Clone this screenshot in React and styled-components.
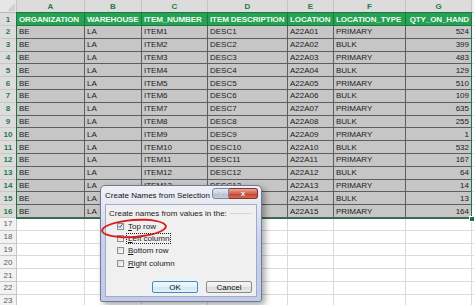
import React from "react";
import styled, { createGlobalStyle } from "styled-components";

const GlobalStyle = createGlobalStyle`
  html, body {
    margin: 0;
    padding: 0;
    background: #fff;
    overflow: hidden;
  }
  body {
    font-family: "Liberation Sans", Arial, sans-serif;
  }
`;

const COLS = ["A", "B", "C", "D", "E", "F", "G"];
const HEADERS = ["ORGANIZATION", "WAREHOUSE", "ITEM_NUMBER", "ITEM DESCRIPTION", "LOCATION", "LOCATION_TYPE", "QTY_ON_HAND"];
const QTY = [524, 399, 483, 129, 510, 109, 635, 255, 1, 532, 167, 64, 14, 13, 164];
const TOTAL_ROWS = 24;

const Sheet = styled.div`
   position: relative;
   width: 474px;
   height: 305px;
   overflow: hidden;
   display: grid;
   grid-template-columns: 17px 68px 57px 66px 80px 46px 72px 66px 1fr;
   grid-template-rows: 13px 13px repeat(${TOTAL_ROWS - 1}, 12.8px);
   font-size: 8px;
`;

const Corner = styled.div`
   position: relative;
   background: #e6e6e6;
   border-right: 1px solid #c6c6c6;
   border-bottom: 1px solid #b8b8b8;
   box-sizing: border-box;
   &::after{
      content: "";
      position: absolute;
      right: 1px;
      bottom: 1px;
      border-left: 8px solid transparent;
      border-bottom: 8px solid #cfcfcf;
   }
`;

const ColHead = styled.div`
   box-sizing: border-box;
   display: flex;
   align-items: center;
   justify-content: center;
   background: ${p => p.$sel ? "#dcdcdc" : "#f2f2f2"};
   color: ${p => p.$sel ? "#1f7a45" : "#555"};
   font-weight: bold;
   border-right: 1px solid #c4c4c4;
   border-bottom: 1px solid ${p => p.$sel ? "#9cc9ad" : "#c4c4c4"};
`;

const RowHead = styled.div`
   box-sizing: border-box;
   display: flex;
   align-items: center;
   justify-content: center;
   background: ${p => p.$sel ? "#dcdcdc" : "#f2f2f2"};
   color: ${p => p.$sel ? "#1f7a45" : "#5a5a5a"};
   font-weight: ${p => p.$sel ? "bold" : "normal"};
   border-right: 1px solid ${p => p.$sel ? "#9cc9ad" : "#c4c4c4"};
   border-bottom: 1px solid #c8c8c8;
`;

const Cell = styled.div`
   box-sizing: border-box;
   display: flex;
   align-items: center;
   justify-content: ${p => p.$right ? "flex-end" : "flex-start"};
   padding: 0 2px;
   white-space: nowrap;
   overflow: hidden;
   ${p => p.$kind === "head" && `
      background: #27a255;
      color: #f1faf1;
      font-weight: bold;
      letter-spacing: -0.1px;
      border-right: 1px solid #1a7a3e;
      border-bottom: 1px solid #1a7a3e;
   `}
   ${p => p.$kind === "data" && `
      background: #c6c6c6;
      color: #1c1c1c;
      border-right: 1px solid #5e5e5e;
      border-bottom: 1px solid #5e5e5e;
   `}
   ${p => p.$kind === "empty" && `
      background: #fff;
      border-right: 1px solid #dadada;
      border-bottom: 1px solid #dadada;
   `}
`;

const Tail = styled.div`
   background: ${p => p.$head ? "#f2f2f2" : "#fff"};
   border-bottom: 1px solid ${p => p.$head ? "#c4c4c4" : "#e0e0e0"};
   box-sizing: border-box;
`;

const Selection = styled.div`
   position: absolute;
   grid-column: 2 / 9;
   grid-row: 2 / 18;
   top: -1px;
   left: -1px;
   right: 0;
   bottom: -1px;
   border: 1.5px solid #217346;
   pointer-events: none;
   &::after{
      content: "";
      position: absolute;
      right: -4px;
      bottom: -4px;
      width: 4px;
      height: 4px;
      background: #217346;
      border: 1px solid #fff;
   }
`;

/* ---------- dialog ---------- */

const Dialog = styled.div`
   position: absolute;
   left: 100px;
   top: 185px;
   width: 162px;
   height: 117px;
   box-sizing: border-box;
   display: flex;
   flex-direction: column;
   padding: 0 4px 4px 4px;
   border: 1px solid #6f7894;
   border-radius: 5px 5px 2px 2px;
   background: linear-gradient(to bottom, #eff1f6 0px, #e6e9f2 18px, #c8d0ee 55px, #c3cbeb 100%);
   box-shadow: 3px 3px 6px rgba(0, 0, 0, 0.35);
   font-size: 8px;
   color: #1a1a1a;
   z-index: 3;
`;

const TitleBar = styled.div`
   height: 18px;
   display: flex;
   align-items: flex-start;
   justify-content: space-between;
`;

const Title = styled.span`
   margin-top: 5px;
   white-space: nowrap;
   font-size: 8px;
   color: #111;
`;

const Caps = styled.div`
   display: flex;
   margin-top: 2px;
   margin-right: -1px;
`;

const CapButton = styled.div`
   height: 11px;
   width: ${p => p.$close ? "29px" : "17px"};
   box-sizing: border-box;
   display: flex;
   align-items: center;
   justify-content: center;
   font-weight: bold;
   font-size: ${p => p.$close ? "8px" : "7px"};
   color: ${p => p.$close ? "#fff" : "#f4f6fb"};
   border: 1px solid ${p => p.$close ? "#8a3026" : "#7c859f"};
   border-radius: ${p => p.$close ? "0 3px 3px 0" : "3px 0 0 3px"};
   border-left-width: ${p => p.$close ? "0" : "1px"};
   background: ${p => p.$close
      ? "linear-gradient(to bottom, #e9a99c, #d4604f 50%, #c2402f 51%, #d46a55)"
      : "linear-gradient(to bottom, #e9ecf4, #c9cfe0 50%, #b4bcd4 51%, #c6cde0)"};
   text-shadow: 0 0 1px rgba(0,0,0,0.4);
`;

const Body = styled.div`
   flex: 1;
   display: flex;
   flex-direction: column;
   background: #f0f0f0;
   border: 1px solid #a3abc4;
   padding: 3px 4px 3px 3px;
`;

const Legend = styled.div`
   display: flex;
   align-items: center;
   gap: 3px;
   height: 10px;
   white-space: nowrap;
   &::after{
      content: "";
      flex: 1;
      height: 1px;
      background: #d6d6d6;
   }
`;

const Options = styled.div`
   display: flex;
   flex-direction: column;
   padding: 2px 0 0 8px;
`;

const CheckRow = styled.div`
   height: 12.3px;
   display: flex;
   align-items: center;
   gap: 3px;
`;

const Box = styled.span`
   width: 7px;
   height: 7px;
   box-sizing: border-box;
   border: 1px solid #8e8f8f;
   background: linear-gradient(135deg, #dcdcdc, #fbfbfb);
   display: flex;
   align-items: center;
   justify-content: center;
`;

const Label = styled.span`
   padding: 0 1px;
   outline: ${p => p.$focus ? "1px dotted #222" : "none"};
   line-height: 9px;
   u{
      text-decoration: underline;
   }
`;

const Buttons = styled.div`
   margin-top: auto;
   display: flex;
   justify-content: flex-end;
   gap: 8px;
`;

const Button = styled.div`
   width: 46px;
   height: 12px;
   box-sizing: border-box;
   display: flex;
   align-items: center;
   justify-content: center;
   border: 1px solid ${p => p.$primary ? "#3c8fc4" : "#8a8a8a"};
   border-radius: 2px;
   background: ${p => p.$primary
      ? "linear-gradient(to bottom, #f2f9fd, #e2f1fb 50%, #cfe7f7 51%, #e3f2fb)"
      : "linear-gradient(to bottom, #f6f6f6, #ebebeb 50%, #dcdcdc 51%, #e8e8e8)"};
   font-size: 8px;
   color: #111;
`;

const Highlight = styled.div`
   position: absolute;
   left: 0px;
   top: 33px;
   width: 66px;
   height: 19px;
   box-sizing: border-box;
   border: 2.5px solid #d81d1d;
   border-radius: 50%;
   transform: rotate(-4deg);
   pointer-events: none;
`;

const Check = () => (
   <svg width="6" height="6" viewBox="0 0 6 6">
      <path d="M0.8 3.2 L2.4 4.8 L5.3 1" fill="none" stroke="#2b4a7a" strokeWidth="1.2" />
   </svg>
);

const OPTIONS = [
   { key: "T", rest: "op row", checked: true },
   { key: "L", rest: "eft column", focus: true },
   { key: "B", rest: "ottom row" },
   { key: "R", rest: "ight column" },
];

const rowCells = (r) => {
   if (r === 1) {
      return HEADERS.map(h => <Cell key={h} $kind="head" $right={h === "QTY_ON_HAND"}>{h}</Cell>);
   }
   if (r <= 16) {
      const n = r - 1;
      const pad = String(n).padStart(2, "0");
      const values = ["BE", "LA", `ITEM${n}`, `DESC${n}`, `A22A${pad}`, n % 2 ? "PRIMARY" : "BULK", QTY[n - 1]];
      return values.map((v, i) => <Cell key={i} $kind="data" $right={i === 6}>{v}</Cell>);
   }
   return COLS.map(c => <Cell key={c} $kind="empty" />);
};

/************************************************************
   MAIN RENDER
************************************************************/
const App = () => {
   const rows = Array.from({ length: TOTAL_ROWS }, (_, i) => i + 1);
   return (
      <>
         <GlobalStyle />
         <Sheet>
            <Corner />
            {COLS.map(c => <ColHead key={c} $sel>{c}</ColHead>)}
            <Tail $head />

            {rows.map(r => (
               <React.Fragment key={r}>
                  <RowHead $sel={r <= 16}>{r}</RowHead>
                  {rowCells(r)}
                  <Tail />
               </React.Fragment>
            ))}

            <Selection />

            <Dialog>
               <TitleBar>
                  <Title>Create Names from Selection</Title>
                  <Caps>
                     <CapButton>?</CapButton>
                     <CapButton $close>x</CapButton>
                  </Caps>
               </TitleBar>
               <Body>
                  <Legend>Create names from values in the:</Legend>
                  <Options>
                     {OPTIONS.map(o => (
                        <CheckRow key={o.key}>
                           <Box>{o.checked && <Check />}</Box>
                           <Label $focus={o.focus}><u>{o.key}</u>{o.rest}</Label>
                        </CheckRow>
                     ))}
                  </Options>
                  <Buttons>
                     <Button $primary>OK</Button>
                     <Button>Cancel</Button>
                  </Buttons>
               </Body>
               <Highlight />
            </Dialog>
         </Sheet>
      </>
   );
};

export default App;
